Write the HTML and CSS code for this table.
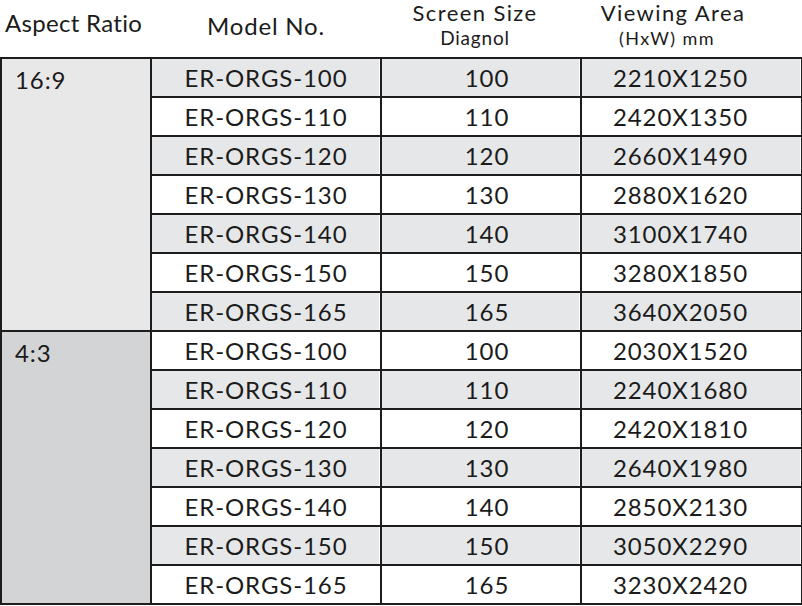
FILE: index.html
```html
<!DOCTYPE html>
<html>
<head>
<meta charset="utf-8">
<link rel="stylesheet" href="styles.css">
</head>
<body>
<table class="spec">
  <colgroup>
    <col class="c1"><col class="c2"><col class="c3"><col class="c4">
  </colgroup>
  <thead>
    <tr class="head">
      <th class="h-aspect">Aspect Ratio</th>
      <th class="h-model">Model No.</th>
      <th class="h-size"><span class="h-main">Screen Size</span><span class="h-sub">Diagnol</span></th>
      <th class="h-area"><span class="h-main">Viewing Area</span><span class="h-sub h-sub2">(HxW) mm</span></th>
    </tr>
  </thead>
  <tbody>
    <tr class="g"><td class="aspect a169" rowspan="7">16:9</td><td class="model">ER-ORGS-100</td><td class="size">100</td><td class="area">2210X1250</td></tr>
    <tr class="w"><td class="model">ER-ORGS-110</td><td class="size">110</td><td class="area">2420X1350</td></tr>
    <tr class="g"><td class="model">ER-ORGS-120</td><td class="size">120</td><td class="area">2660X1490</td></tr>
    <tr class="w"><td class="model">ER-ORGS-130</td><td class="size">130</td><td class="area">2880X1620</td></tr>
    <tr class="g"><td class="model">ER-ORGS-140</td><td class="size">140</td><td class="area">3100X1740</td></tr>
    <tr class="w"><td class="model">ER-ORGS-150</td><td class="size">150</td><td class="area">3280X1850</td></tr>
    <tr class="g"><td class="model">ER-ORGS-165</td><td class="size">165</td><td class="area">3640X2050</td></tr>
    <tr class="w"><td class="aspect a43" rowspan="7">4:3</td><td class="model">ER-ORGS-100</td><td class="size">100</td><td class="area">2030X1520</td></tr>
    <tr class="g"><td class="model">ER-ORGS-110</td><td class="size">110</td><td class="area">2240X1680</td></tr>
    <tr class="w"><td class="model">ER-ORGS-120</td><td class="size">120</td><td class="area">2420X1810</td></tr>
    <tr class="g"><td class="model">ER-ORGS-130</td><td class="size">130</td><td class="area">2640X1980</td></tr>
    <tr class="w"><td class="model">ER-ORGS-140</td><td class="size">140</td><td class="area">2850X2130</td></tr>
    <tr class="g"><td class="model">ER-ORGS-150</td><td class="size">150</td><td class="area">3050X2290</td></tr>
    <tr class="w"><td class="model">ER-ORGS-165</td><td class="size">165</td><td class="area">3230X2420</td></tr>
  </tbody>
</table>
</body>
</html>
```
FILE: styles.css
```css
html, body {
  margin: 0;
  padding: 0;
  background: #ffffff;
}
body {
  font-family: "Lato", "Liberation Sans", sans-serif;
  color: #1b1b1b;
}
.spec {
  border-collapse: collapse;
  table-layout: fixed;
  width: 801px;
  margin: 0;
}
.c1 { width: 150px; }
.c2 { width: 230px; }
.c3 { width: 200px; }
.c4 { width: 221px; }

.head th {
  height: 58px;
  padding: 0;
  font-weight: 400;
  vertical-align: top;
  border: none;
  box-sizing: border-box;
  line-height: 24px;
}
.h-aspect {
  text-align: left;
  font-size: 24px;
  padding-left: 4px !important;
  padding-top: 11px !important;
  letter-spacing: 0.3px;
}
.h-model {
  text-align: center;
  font-size: 24px;
  padding-top: 14px !important;
  letter-spacing: 0.8px;
}
.h-size { text-align: center; padding-right: 12px !important; padding-top: 1px !important; }
.h-area { text-align: center; padding-right: 37px !important; padding-top: 1px !important; }
.h-main {
  display: block;
  font-size: 22px;
  line-height: 24px;
  letter-spacing: 1.4px;
}
.h-sub {
  display: block;
  font-size: 19px;
  line-height: 26px;
  letter-spacing: 0.8px;
}
.h-sub2 { font-size: 18px; letter-spacing: 1.4px; padding-right: 12px; }

.spec tbody td {
  border: 2px solid #1d1d1d;
  height: 37px;
  padding: 0;
  font-size: 24px;
  letter-spacing: 0.9px;
  vertical-align: middle;
  text-align: center;
  white-space: nowrap;
}
.g td { background: #e6e7e8; box-shadow: inset -1px 0 0 #ffffff; }
.w td { background: #ffffff; }
.spec tbody td.aspect {
  vertical-align: top;
  text-align: left;
  padding-left: 13px;
  padding-top: 6px;
  box-shadow: none;
}
.spec tbody td.a169 { background: #e8e8e9; }
.spec tbody td.a43 { background: #d3d4d6; }
.spec tbody td.size { padding-left: 12px; }
.spec tbody td.area { padding-right: 22px; }
```
